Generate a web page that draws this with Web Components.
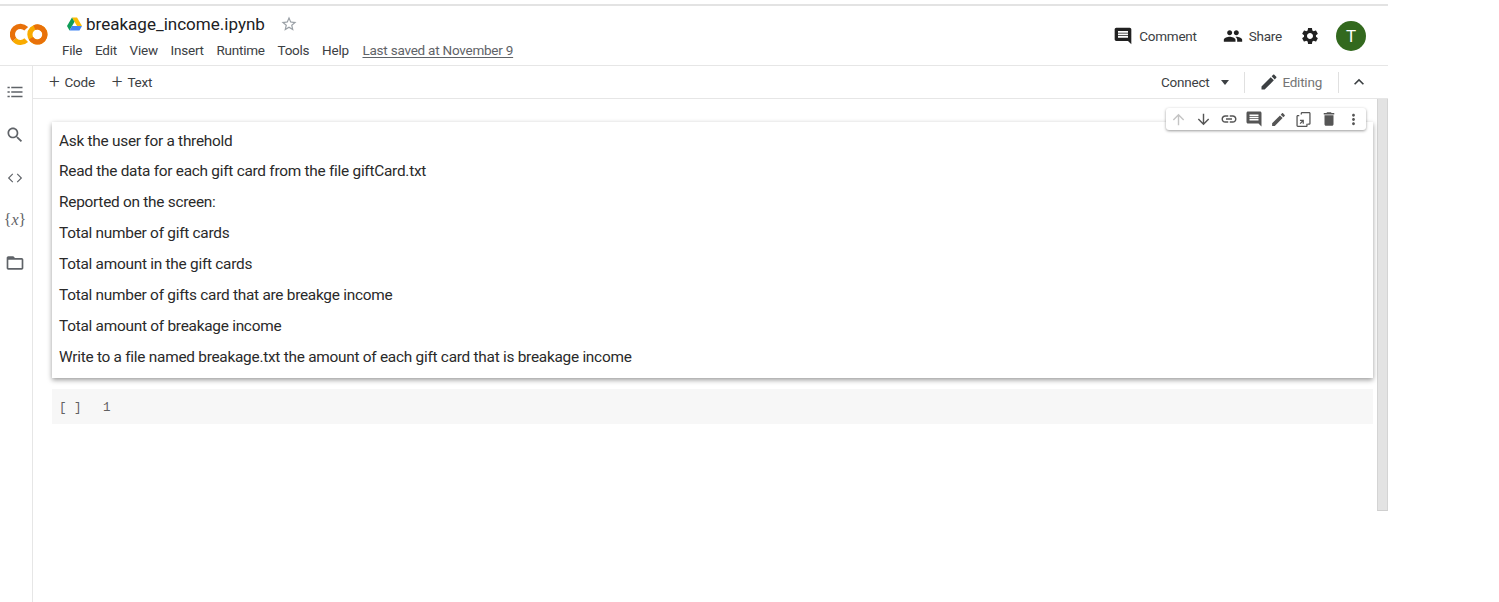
<!DOCTYPE html>
<html lang="en"><head><meta charset="utf-8"><title>breakage_income.ipynb</title>
<style>
html,body{margin:0;padding:0;background:#fff;height:602px;overflow:hidden;font-family:Roboto,"Liberation Sans",sans-serif;color:#3c4043}
</style></head><body>
<colab-app>
  <colab-header slot="header"></colab-header>
  <colab-sidebar slot="side"></colab-sidebar>
  <colab-toolbar slot="toolbar"></colab-toolbar>
  <notebook-pane slot="main">
    <text-cell>
      <p>Ask the user for a threhold</p>
      <p>Read the data for each gift card from the file giftCard.txt</p>
      <p>Reported on the screen:</p>
      <p>Total number of gift cards</p>
      <p>Total amount in the gift cards</p>
      <p>Total number of gifts card that are breakge income</p>
      <p>Total amount of breakage income</p>
      <p>Write to a file named breakage.txt the amount of each gift card that is breakage income</p>
    </text-cell>
    <code-cell></code-cell>
  </notebook-pane>
</colab-app>
<script>
const P={
comment:'M21.99 4c0-1.1-.89-2-1.99-2H4c-1.1 0-2 .9-2 2v12c0 1.1.9 2 2 2h14l4 4-.01-18zM18 14H6v-2h12v2zm0-3H6V9h12v2zm0-3H6V6h12v2z',
people:'M16 11c1.66 0 2.99-1.34 2.99-3S17.66 5 16 5c-1.66 0-3 1.34-3 3s1.34 3 3 3zm-8 0c1.66 0 2.99-1.34 2.99-3S9.66 5 8 5C6.34 5 5 6.34 5 8s1.34 3 3 3zm0 2c-2.33 0-7 1.17-7 3.5V19h14v-2.5c0-2.33-4.67-3.5-7-3.5zm8 0c-.29 0-.62.02-.97.05 1.16.84 1.97 1.97 1.97 3.45V19h6v-2.5c0-2.33-4.67-3.5-7-3.5z',
settings:'M19.14 12.94c.04-.3.06-.61.06-.94 0-.32-.02-.64-.07-.94l2.03-1.58c.18-.14.23-.41.12-.61l-1.92-3.32c-.12-.22-.37-.29-.59-.22l-2.39.96c-.5-.38-1.03-.7-1.62-.94l-.36-2.54c-.04-.24-.24-.41-.48-.41h-3.84c-.24 0-.43.17-.47.41l-.36 2.54c-.59.24-1.13.57-1.62.94l-2.39-.96c-.22-.08-.47 0-.59.22L2.74 8.87c-.12.21-.08.47.12.61l2.03 1.58c-.05.3-.09.63-.09.94s.02.64.07.94l-2.03 1.58c-.18.14-.23.41-.12.61l1.92 3.32c.12.22.37.29.59.22l2.39-.96c.5.38 1.03.7 1.62.94l.36 2.54c.05.24.24.41.48.41h3.84c.24 0 .44-.17.47-.41l.36-2.54c.59-.24 1.13-.56 1.62-.94l2.39.96c.22.08.47 0 .59-.22l1.92-3.32c.12-.22.07-.47-.12-.61l-2.01-1.58zM12 15.6c-1.98 0-3.6-1.62-3.6-3.6s1.62-3.6 3.6-3.6 3.6 1.62 3.6 3.6-1.62 3.6-3.6 3.6z',
edit:'M3 17.25V21h3.75L17.81 9.94l-3.75-3.75L3 17.25zM20.71 7.04c.39-.39.39-1.02 0-1.41l-2.34-2.34c-.39-.39-1.02-.39-1.41 0l-1.83 1.83 3.75 3.75 1.83-1.83z',
less:'M12 8l-6 6 1.41 1.41L12 10.83l4.59 4.58L18 14z',
up:'M4 12l1.41 1.41L11 7.83V20h2V7.83l5.58 5.59L20 12l-8-8-8 8z',
down:'M20 12l-1.41-1.41L13 16.17V4h-2v12.17l-5.58-5.59L4 12l8 8 8-8z',
link:'M3.9 12c0-1.71 1.39-3.1 3.1-3.1h4V7H7c-2.76 0-5 2.24-5 5s2.24 5 5 5h4v-1.9H7c-1.71 0-3.1-1.39-3.1-3.1zM8 13h8v-2H8v2zm9-6h-4v1.9h4c1.71 0 3.1 1.39 3.1 3.1s-1.39 3.1-3.1 3.1h-4V17h4c2.76 0 5-2.24 5-5s-2.24-5-5-5z',
trash:'M6 19c0 1.1.9 2 2 2h8c1.1 0 2-.9 2-2V7H6v12zM19 4h-3.5l-1-1h-5l-1 1H5v2h14V4z',
more:'M12 8c1.1 0 2-.9 2-2s-.9-2-2-2-2 .9-2 2 .9 2 2 2zm0 2c-1.1 0-2 .9-2 2s.9 2 2 2 2-.9 2-2-.9-2-2-2zm0 6c-1.1 0-2 .9-2 2s.9 2 2 2 2-.9 2-2-.9-2-2-2z',
search:'M15.5 14h-.79l-.28-.27C15.41 12.59 16 11.11 16 9.5 16 5.91 13.09 3 9.5 3S3 5.91 3 9.5 5.91 16 9.5 16c1.61 0 3.09-.59 4.23-1.57l.27.28v.79l5 4.99L20.49 19l-4.99-5zm-6 0C7.01 14 5 11.99 5 9.5S7.01 5 9.5 5 14 7.01 14 9.5 11.99 14 9.5 14z',
folder:'M20 6h-8l-2-2H4c-1.1 0-1.99.9-1.99 2L2 18c0 1.1.9 2 2 2h16c1.1 0 2-.9 2-2V8c0-1.1-.9-2-2-2zm0 12H4V8h16v10z',
star:'M22 9.24l-7.19-.62L12 2 9.19 8.63 2 9.24l5.46 4.73L5.82 21 12 17.27 18.18 21l-1.64-7.03L22 9.24zM12 15.4l-3.76 2.27 1-4.28-3.32-2.88 4.38-.38L12 6.1l1.71 4.04 4.38.38-3.32 2.88 1 4.28L12 15.4z',
list:'M7 5h15v2H7zM7 11h15v2H7zM7 17h15v2H7zM2 5h3v2H2zM2 11h3v2H2zM2 17h3v2H2z',
code:'M9.6 16.9L4.7 12l4.9-4.9L8.5 6l-6 6 6 6zM14.4 16.9l4.9-4.9-4.9-4.9L15.5 6l6 6-6 6z',
mirror:'M10 1.5h10c1.1 0 2 .9 2 2v14c0 1.1-.9 2-2 2h-2v-1.8h2.2V3.3H9.8V5H8V3.5c0-1.1.9-2 2-2zM2 7.5c0-1.1.9-2 2-2h2v1.8H3.8v13.4H16V18h1.8v3c0 1-.8 1.5-1.8 1.5H4c-1.1 0-2-.9-2-2zM7 12.5h5.5V18h-1.7v-2.6l-3 3-1.2-1.2 3-3H7z'
};
class MdIcon extends HTMLElement{
  connectedCallback(){
    const s=this.getAttribute('size')||24,c=this.getAttribute('color')||'currentColor';
    this.attachShadow({mode:'open'}).innerHTML=`<style>:host{display:inline-flex;flex:none;width:${s}px;height:${s}px}svg{display:block;width:100%;height:100%}</style><svg viewBox="0 0 24 24" fill="${c}"><path d="${P[this.getAttribute('name')]}"/></svg>`;
  }
}
customElements.define('md-icon',MdIcon);

class ColabApp extends HTMLElement{
  constructor(){super();this.attachShadow({mode:'open'}).innerHTML=`<style>
  :host{display:grid;width:1388px;height:602px;box-sizing:border-box;padding-top:4px;grid-template-columns:33px 1fr;grid-template-rows:62px 33px 1fr;grid-template-areas:"h h" "s t" "s m"}
  ::slotted([slot=header]){grid-area:h}::slotted([slot=side]){grid-area:s}::slotted([slot=toolbar]){grid-area:t}::slotted([slot=main]){grid-area:m}
  </style><slot name="header"></slot><slot name="side"></slot><slot name="toolbar"></slot><slot name="main"></slot>`;}
}
customElements.define('colab-app',ColabApp);

class ColabHeader extends HTMLElement{
  constructor(){super();this.attachShadow({mode:'open'}).innerHTML=`<style>
  :host{display:flex;box-sizing:border-box;border-top:2px solid #e3e3e3;border-bottom:1px solid #e6e6e6;align-items:stretch;padding-left:10px;padding-right:22px}
  .logo{width:38px;height:23px;margin-top:16.5px;flex:none}
  .col{display:flex;flex-direction:column;margin-left:19px}
  .title{display:flex;align-items:center;height:28px;margin-top:4px;font-size:17.05px;color:#202124}
  .title svg{width:15px;height:14px;margin-right:4px;margin-left:0;flex:none}
  .title md-icon{margin-left:15px;color:#9aa0a6}
  .menu{display:flex;font-size:13.5px;letter-spacing:-.23px;color:#3c4043;margin-top:3px;height:18px;align-items:center;margin-left:-5px;gap:12.7px}
  .menu u{margin-left:1px;color:#5f6368;text-underline-offset:2px}
  .right{margin-left:auto;display:flex;align-items:center;font-size:13.5px;letter-spacing:-.23px;color:#3c4043}
  .right span{margin-left:6px}
  .c{color:#212121}.share{margin-left:26px}.gear{margin-left:18px}
  .av{width:30px;height:30px;border-radius:50%;background:#33691e;color:#fff;font-size:17px;display:flex;align-items:center;justify-content:center;margin-left:16px}
  </style>
  <svg class="logo" viewBox="0 0 38 23" fill="none" stroke-width="5.2">
    <circle cx="27.4" cy="11.5" r="7.5" stroke="#f9ab00"/>
    <path d="M24.4 4.6A7.5 7.5 0 1 1 20.9 15.3" stroke="#e8710a"/>
    <path d="M4.4 16.6A8 8 0 0 0 16.2 17.2" stroke="#f9ab00"/>
    <path d="M16.2 5.8A8 8 0 0 0 4.4 16.6" stroke="#e8710a"/>
  </svg>
  <div class="col">
    <div class="title">
      <svg viewBox="0 0 16 14"><polygon points="5.3,0 10.7,0 16,9.2 10.7,9.2" fill="#fbbc04"/><polygon points="5.3,0 8,4.6 2.7,14 0,9.2" fill="#0f9d58"/><polygon points="2.7,14 5.4,9.2 16,9.2 13.3,14" fill="#4285f4"/></svg>
      <span>breakage_income.ipynb</span><md-icon name="star" size="18"></md-icon>
    </div>
    <div class="menu"><span>File</span><span>Edit</span><span>View</span><span>Insert</span><span>Runtime</span><span>Tools</span><span>Help</span><u>Last saved at November 9</u></div>
  </div>
  <div class="right">
    <md-icon class="c" name="comment" size="20"></md-icon><span>Comment</span>
    <md-icon class="c share" name="people" size="20"></md-icon><span>Share</span>
    <md-icon class="c gear" name="settings" size="20"></md-icon>
    <div class="av">T</div>
  </div>`;}
}
customElements.define('colab-header',ColabHeader);

class ColabSidebar extends HTMLElement{
  constructor(){super();this.attachShadow({mode:'open'}).innerHTML=`<style>
  :host{display:flex;flex-direction:column;align-items:center;box-sizing:border-box;border-right:1px solid #e6e6e6;color:#5f6368;padding:16px 2px 0 0;gap:22.8px}
  div{width:20px;height:20px;display:flex;align-items:center;justify-content:center}
  span{font:16px "Liberation Serif",serif;white-space:nowrap;color:#5f6368}
  </style>
  <div><md-icon name="list" size="18"></md-icon></div>
  <div><md-icon name="search" size="20"></md-icon></div>
  <div><md-icon name="code" size="18"></md-icon></div>
  <div><span>{<i>x</i>}</span></div>
  <div><md-icon name="folder" size="20"></md-icon></div>`;}
}
customElements.define('colab-sidebar',ColabSidebar);

class ColabToolbar extends HTMLElement{
  constructor(){super();this.attachShadow({mode:'open'}).innerHTML=`<style>
  :host{display:flex;align-items:center;box-sizing:border-box;border-bottom:1px solid #e6e6e6;font-size:13.5px;letter-spacing:-.23px;color:#3c4043;padding-left:16px;padding-right:19px;height:33px}
  .add{display:flex;align-items:center;margin-right:17px}
  .add b{font-weight:300;font-size:19px;line-height:14px;margin-right:5px}
  .right{margin-left:auto;display:flex;align-items:center;height:100%}
  .sep{width:1px;height:21px;background:#e0e0e0}
  .caret{width:0;height:0;border:4.5px solid transparent;border-top:5px solid #3c4043;border-bottom:0;margin:0 15px 0 12px}
  .ed{color:#757575;margin:0 16px 0 3px}
  .pen{margin-left:14px;color:#3c4043}
  .less{margin-left:10px;color:#3c4043}
  </style>
  <div class="add"><b>+</b><span>Code</span></div><div class="add"><b>+</b><span>Text</span></div>
  <div class="right"><span>Connect</span><i class="caret"></i><i class="sep"></i><md-icon class="pen" name="edit" size="20"></md-icon><span class="ed">Editing</span><i class="sep"></i><md-icon class="less" name="less" size="20"></md-icon></div>`;}
}
customElements.define('colab-toolbar',ColabToolbar);

class NotebookPane extends HTMLElement{
  constructor(){super();this.attachShadow({mode:'open'}).innerHTML=`<style>
  :host{display:grid;grid-template-columns:1fr 11px;min-height:0}
  .doc{padding:23px 4px 0 19px;display:flex;flex-direction:column;gap:11px}
  .bar{height:412px;background:#e3e3e3;border-left:1px solid #d4d4d4;border-right:1px solid #d4d4d4;border-bottom:1px solid #cfcfcf;box-sizing:border-box}
  </style><div class="doc"><slot></slot></div><div class="bar"></div>`;}
}
customElements.define('notebook-pane',NotebookPane);

class CellToolbar extends HTMLElement{
  constructor(){super();this.attachShadow({mode:'open'}).innerHTML=`<style>
  :host{position:absolute;top:-14px;right:7px;display:flex;align-items:center;height:22px;background:#fff;border-radius:3px;box-shadow:0 1px 3px rgba(0,0,0,.4);color:#555}
  div{width:25px;display:flex;justify-content:center}
  </style>
  <div><md-icon name="up" size="17" color="#c4c4c4"></md-icon></div>
  <div><md-icon name="down" size="17"></md-icon></div>
  <div><md-icon name="link" size="18"></md-icon></div>
  <div><md-icon name="comment" size="18"></md-icon></div>
  <div><md-icon name="edit" size="17"></md-icon></div>
  <div><md-icon name="mirror" size="17"></md-icon></div>
  <div><md-icon name="trash" size="18"></md-icon></div>
  <div><md-icon name="more" size="17"></md-icon></div>`;}
}
customElements.define('cell-toolbar',CellToolbar);

class TextCell extends HTMLElement{
  constructor(){super();this.attachShadow({mode:'open'}).innerHTML=`<style>
  :host{display:block;position:relative;box-sizing:border-box;height:256px;padding:3.6px 7px 0;background:#fff;box-shadow:0 2px 5px rgba(0,0,0,.4);font-size:15.4px;letter-spacing:-.26px;color:#2a2a2a}
  ::slotted(p){margin:0;height:30.86px;line-height:30.86px;white-space:nowrap}
  </style><cell-toolbar></cell-toolbar><slot></slot>`;}
}
customElements.define('text-cell',TextCell);

class CodeCell extends HTMLElement{
  constructor(){super();this.attachShadow({mode:'open'}).innerHTML=`<style>
  :host{display:flex;align-items:center;height:35px;padding:2px 0 0 7px;box-sizing:border-box;background:#f7f7f7;font:12.5px "Liberation Mono",monospace;color:#616161}
  .run{width:44px;white-space:pre}
  </style><span class="run">[ ]</span><span>1</span>`;}
}
customElements.define('code-cell',CodeCell);
</script>
</body></html>
